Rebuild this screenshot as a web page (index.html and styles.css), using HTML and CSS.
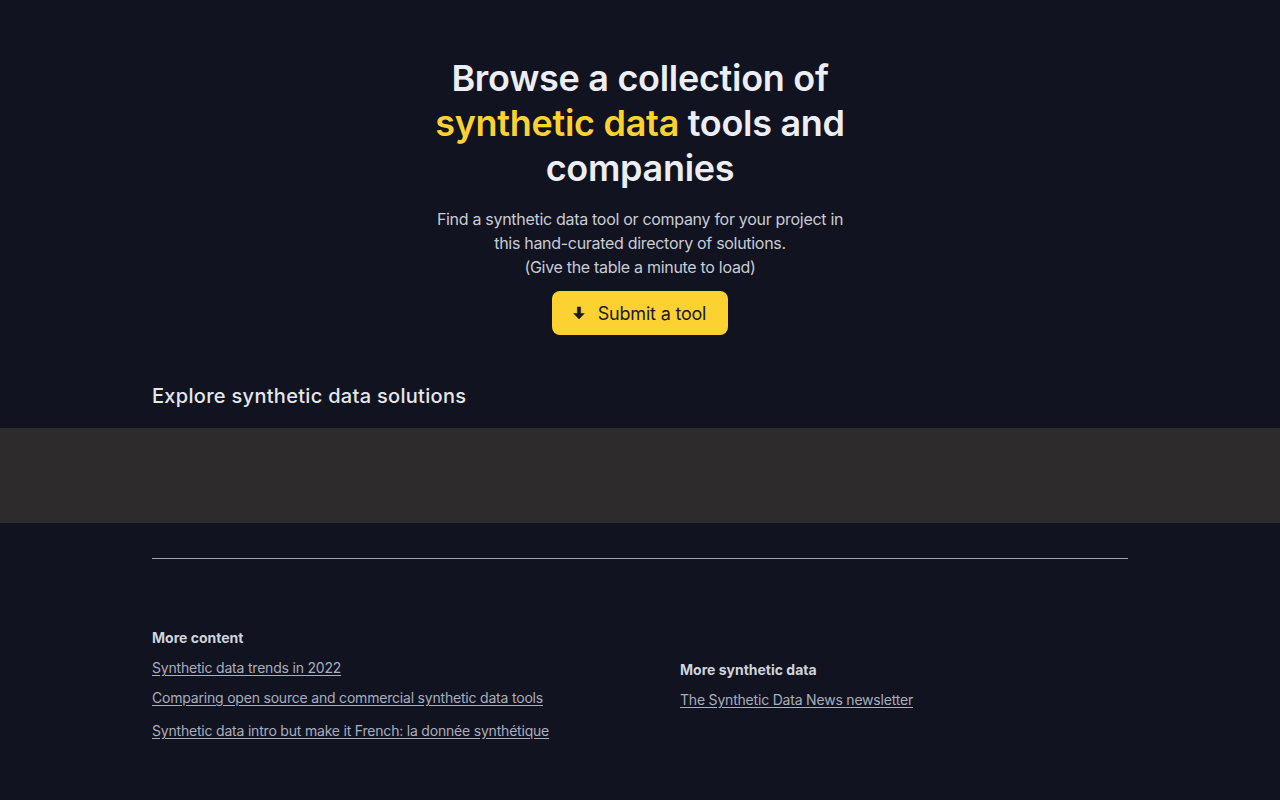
FILE: index.html
```html
<!DOCTYPE html>
<html lang="en">
<head>
<meta charset="utf-8">
<title>Synthetic data tools</title>
<link rel="stylesheet" href="styles.css">
</head>
<body>
<main class="page">
  <section class="hero">
    <h1 class="hero-title">Browse a collection of <span class="accent">synthetic data</span> tools and companies</h1>
    <p class="hero-sub">Find a synthetic data tool or company for your project in this hand-curated directory of solutions.<br>(Give the table a minute to load)</p>
    <a class="btn" href="#">
      <svg class="btn-icon" viewBox="0 0 14 14" width="14" height="14" aria-hidden="true"><path fill="currentColor" stroke="currentColor" stroke-width="0.6" stroke-linejoin="round" d="M5.4 1h3.2v6.6h3.6L7 13 1.8 7.6h3.6z"/></svg>
      <span>Submit a tool</span>
    </a>
  </section>
  <section class="explore">
    <div class="container">
      <h2 class="explore-title">Explore synthetic data solutions</h2>
    </div>
    <div class="table-band"></div>
  </section>
  <footer class="footer">
    <div class="container">
      <hr class="rule">
      <div class="footer-grid">
        <div class="footer-col">
          <h3 class="footer-head">More content</h3>
          <a class="footer-link" href="#">Synthetic data trends in 2022</a>
          <a class="footer-link" href="#">Comparing open source and commercial synthetic data tools</a>
          <a class="footer-link footer-link-gap" href="#">Synthetic data intro but make it French: la donnée synthétique</a>
        </div>
        <div class="footer-col">
          <h3 class="footer-head">More synthetic data</h3>
          <a class="footer-link" href="#">The Synthetic Data News newsletter</a>
        </div>
      </div>
    </div>
  </footer>
</main>
</body>
</html>
```

FILE: styles.css
```css
* { box-sizing: border-box; }
html, body { margin: 0; padding: 0; }
body {
  background: #111320;
  color: #e5e7eb;
  font-family: Inter, "Noto Sans", sans-serif;
  height: 800px;
  overflow: hidden;
}
.page { display: flex; flex-direction: column; }
.container { width: 976px; margin: 0 auto; }

.hero {
  display: flex;
  flex-direction: column;
  align-items: center;
  padding-top: 56px;
  text-align: center;
}
.hero-title {
  margin: 0;
  width: 440px;
  font-size: 36px;
  line-height: 45px;
  font-weight: 600;
  letter-spacing: -0.3px;
  color: #eceef3;
}
.accent { color: #fbd232; display: inline-block; }
.hero-sub {
  margin: 16px 0 0;
  width: 420px;
  font-size: 16px;
  line-height: 24px;
  color: #c9ccd5;
  letter-spacing: -0.3px;
}
.btn {
  margin-top: 12px;
  display: inline-flex;
  align-items: center;
  gap: 12px;
  height: 44px;
  padding: 0 22px 0 20px;
  background: #fbd232;
  color: #1a1a1a;
  border-radius: 8px;
  text-decoration: none;
  font-size: 18px;
  letter-spacing: -0.2px;
}
.btn-icon { display: block; }

.explore { margin-top: 47px; }
.explore-title {
  margin: 0;
  font-size: 20px;
  line-height: 28px;
  font-weight: 500;
  color: #e5e7eb;
  letter-spacing: 0.3px;
}
.table-band {
  margin-top: 18px;
  height: 95px;
  background: #2d2b2c;
}

.footer { padding-top: 35px; }
.rule {
  margin: 0;
  border: 0;
  border-top: 1px solid #9ea3b0;
}
.footer-grid {
  display: grid;
  grid-template-columns: 448px 448px;
  column-gap: 80px;
  align-items: center;
  margin-top: 69px;
}
.footer-col { display: flex; flex-direction: column; align-items: flex-start; }
.footer-head {
  margin: 0 0 10px;
  font-size: 14px;
  line-height: 20px;
  font-weight: 700;
  color: #cfd3dc;
}
.footer-link {
  font-size: 14px;
  line-height: 20px;
  color: #a9aebd;
  text-decoration: underline;
  text-underline-offset: 2px;
  margin-bottom: 10px;
  letter-spacing: -0.2px;
}
.footer-link-gap { margin-top: 3px; }
```
